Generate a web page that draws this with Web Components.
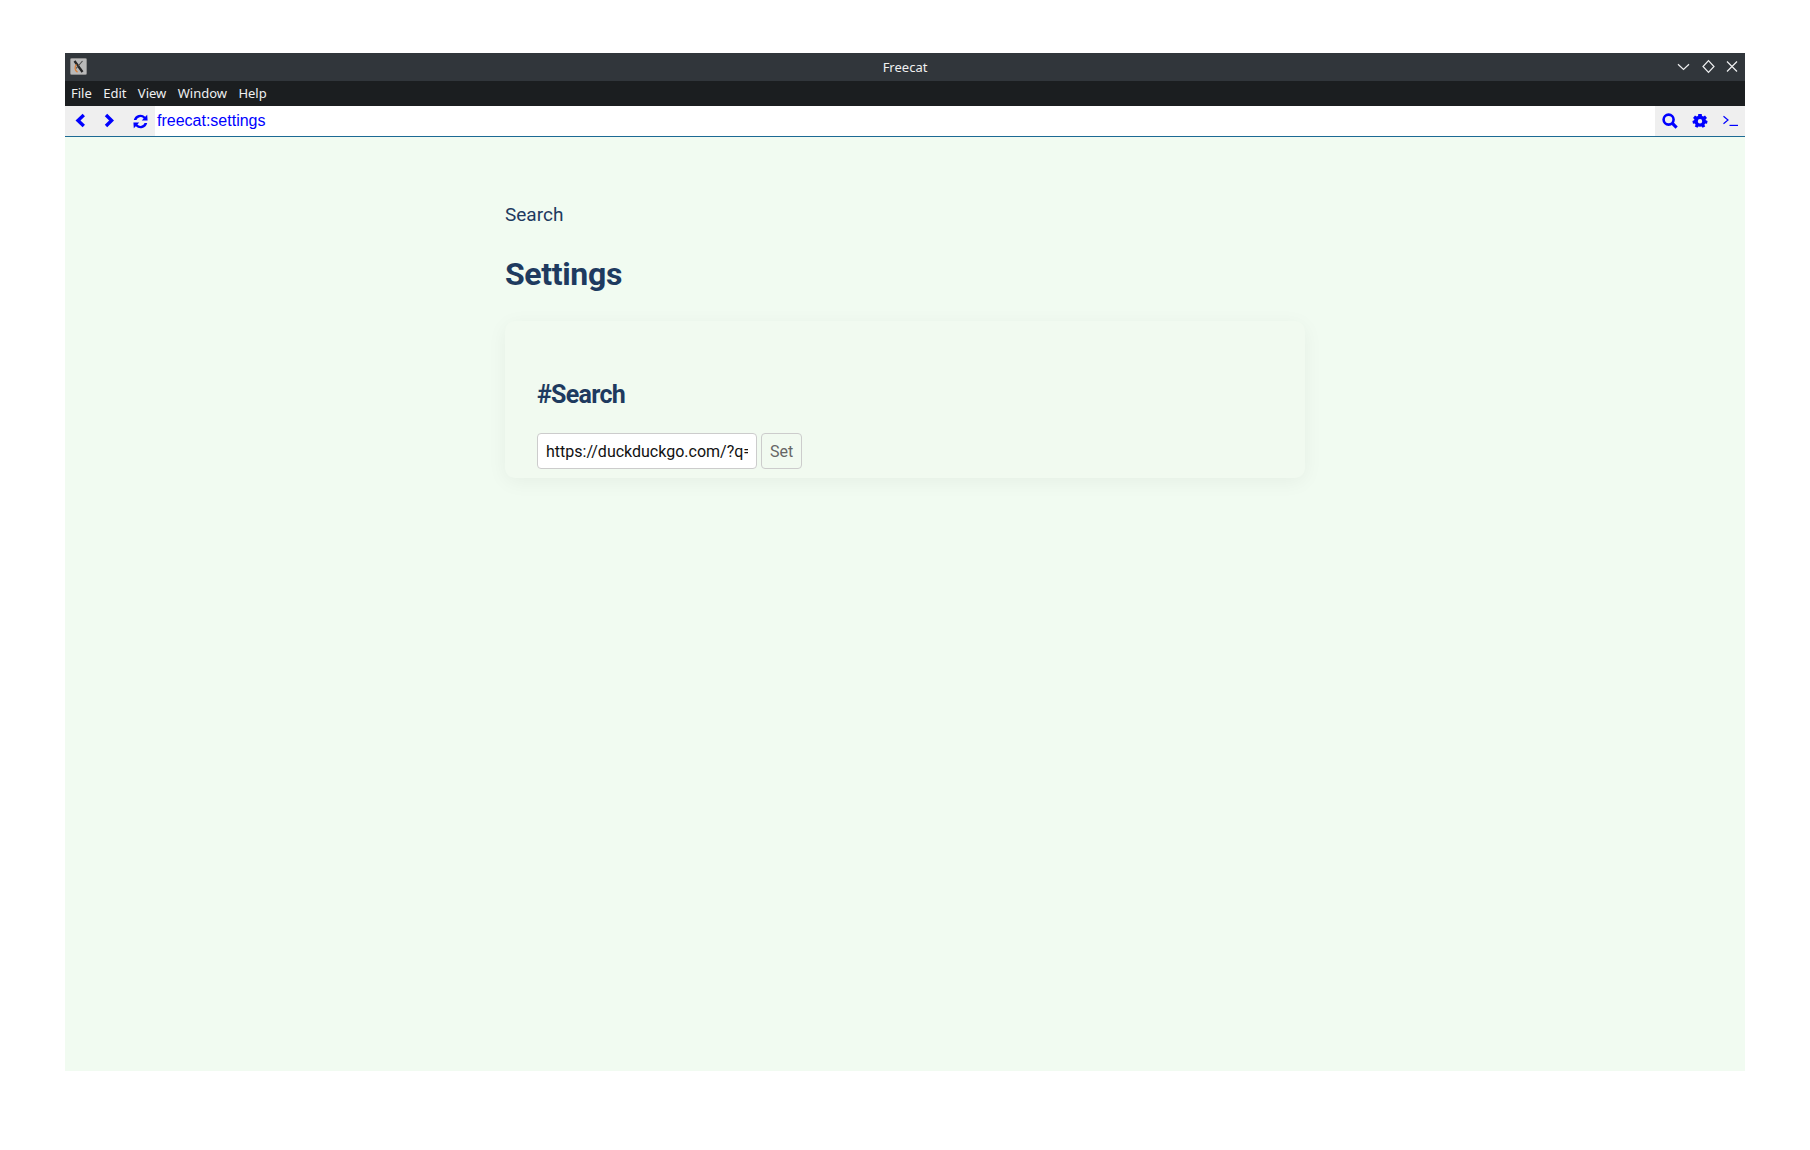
<!DOCTYPE html>
<html>
<head>
<meta charset="utf-8">
<title>Freecat</title>
<style>
    html, body { margin: 0; padding: 0; background: white; }
    body { padding: 53px 65px 0; }
</style>
</head>
<body>
<app-window>
    <title-bar title="Freecat"></title-bar>
    <menu-bar></menu-bar>
    <nav-bar url="freecat:settings"></nav-bar>
    <settings-page>
        <setting-card heading="#Search" value="https://duckduckgo.com/?q=%s"></setting-card>
    </settings-page>
</app-window>
<script>
class AppWindow extends HTMLElement {
    constructor() {
        super();
        this.attachShadow({mode: "open"}).innerHTML = `
        <style>
            :host { display: flex; flex-direction: column; width: 1680px; height: 1018px; }
        </style>
        <slot></slot>`;
    }
}

class TitleBar extends HTMLElement {
    constructor() {
        super();
        this.attachShadow({mode: "open"}).innerHTML = `
        <style>
            :host {
                display: grid; grid-template-columns: 1fr auto 1fr; align-items: center; flex: none;
                height: 28px; background: #31363b; color: #eff0f1;
                font: 13px "Noto Sans", sans-serif;
                padding: 0 5px;
                box-sizing: border-box;
            }
            .icon { width: 17px; height: 17px; display: block; margin-bottom: 1px; }
            .buttons { display: flex; gap: 10px; justify-content: flex-end; margin-bottom: 1px; }
            .buttons svg { width: 15px; height: 15px; display: block; fill: none; stroke: #eff0f1; stroke-width: 1.2; }
        </style>
        <svg class="icon" viewBox="0 0 17 17">
            <rect x="0.5" y="0.5" width="16" height="16" rx="1" fill="#b9b9b9" stroke="#8c8c8c"/>
            <path d="M4.5 3 L12.5 14" stroke="#262626" stroke-width="2.3"/>
            <path d="M12.5 3 L6 10.5" stroke="#4a4a4a" stroke-width="1.1"/>
            <path d="M6.5 6.5 A5 5 0 0 0 7.5 14.2" fill="none" stroke="#d9813c" stroke-width="1.4"/>
        </svg>
        <div class="title">${this.getAttribute("title")}</div>
        <div class="buttons">
            <svg viewBox="0 0 15 15"><path d="M3 5.2 L8.5 10.5 L14 5.2"/></svg>
            <svg viewBox="0 0 15 15"><path d="M8.5 1.6 L14 7.5 L8.5 13.4 L3 7.5 Z"/></svg>
            <svg viewBox="0 0 15 15"><path d="M2 2.5 L12 12.5 M12 2.5 L2 12.5"/></svg>
        </div>`;
    }
}

class MenuBar extends HTMLElement {
    constructor() {
        super();
        const items = ["File", "Edit", "View", "Window", "Help"];
        this.attachShadow({mode: "open"}).innerHTML = `
        <style>
            :host {
                display: flex; align-items: center; gap: 11.4px; flex: none;
                height: 25px; background: #1b1e20; color: #eff0f1;
                font: 13px "Noto Sans", sans-serif;
                padding: 0 6px 2px;
                box-sizing: border-box;
            }
        </style>
        ${items.map(i => `<span>${i}</span>`).join("")}`;
    }
}

class NavBar extends HTMLElement {
    constructor() {
        super();
        this.attachShadow({mode: "open"}).innerHTML = `
        <style>
            :host {
                display: flex; flex: none; height: 31px;
                background: white;
                border-bottom: 1px solid #1d6a94;
                box-sizing: border-box;
                font: 16px "Liberation Sans", sans-serif;
                color: #0000ff;
            }
            .group { display: flex; align-items: center; background: #efefef; height: 30px; box-sizing: border-box; }
            .left { width: 90px; padding-left: 10px; }
            .right { width: 90px; padding-left: 7px; }
            .url { flex: 1; padding-left: 2px; line-height: 29px; }
            svg { display: block; flex: none; }
        </style>
        <div class="group left">
            <svg width="11" height="15" viewBox="0 0 11 15" style="margin:0 18px 2px 0"><path d="M8.8 2 L3 7.5 L8.8 13" fill="none" stroke="#0000ff" stroke-width="3.4"/></svg>
            <svg width="10" height="15" viewBox="0 0 10 15" style="margin:0 19px 2px 0"><path d="M2 2 L7.6 7.5 L2 13" fill="none" stroke="#0000ff" stroke-width="3.4"/></svg>
            <svg width="15" height="15" viewBox="0 0 15 15" fill="#0000ff">
                <path d="M0.8 6 A6.8 6.8 0 0 1 12.2 2.7 L14.2 0.7 L14.6 6.6 L8.8 6.4 L10.6 4.5 A4.3 4.3 0 0 0 3.4 6 Z"/>
                <path d="M14.2 9 A6.8 6.8 0 0 1 2.8 12.3 L0.8 14.3 L0.4 8.4 L6.2 8.6 L4.4 10.5 A4.3 4.3 0 0 0 11.6 9 Z"/>
            </svg>
        </div>
        <div class="url">${this.getAttribute("url")}</div>
        <div class="group right">
            <svg width="16" height="16" viewBox="0 0 16 16" style="margin-right:14px"><circle cx="6.6" cy="6.6" r="5" fill="none" stroke="#0000ff" stroke-width="2.6"/><path d="M10.2 10.2 L14.6 14.6" stroke="#0000ff" stroke-width="3.2"/></svg>
            <svg width="16" height="16" viewBox="0 0 16 16" fill="#0000ff" style="margin-right:15px">
                <path fill-rule="evenodd" d="M6.3 1 H9.7 L10 3 L11.4 3.6 L13 2.5 L15 5 L13.6 6.3 L13.9 7.3 L15.6 8 L15 10.8 L13.2 10.6 L12.4 11.8 L13.2 13.5 L10.6 14.8 L9.6 13.4 L8 13.7 L6.4 13.4 L5.4 14.8 L2.8 13.5 L3.6 11.8 L2.8 10.6 L1 10.8 L0.4 8 L2.1 7.3 L2.4 6.3 L1 5 L3 2.5 L4.6 3.6 L6 3 Z M8 6 A2.2 2.2 0 1 0 8 10.4 A2.2 2.2 0 1 0 8 6 Z"/>
            </svg>
            <svg width="15" height="14" viewBox="0 0 15 14"><path d="M0.5 2.2 L5 6 L0.5 9.8" fill="none" stroke="#0000ff" stroke-width="1.2"/><path d="M6.5 11.4 H15" stroke="#0000ff" stroke-width="1.2"/></svg>
        </div>`;
    }
}

class SettingsPage extends HTMLElement {
    constructor() {
        super();
        this.attachShadow({mode: "open"}).innerHTML = `
        <style>
            :host {
                display: block; flex: 1; min-height: 0;
                background: #f1fbf1;
                color: #1e3a5f;
                font-family: Roboto, sans-serif;
            }
            .inner { width: 800px; margin: 0 auto; padding-top: 66px; }
            .crumb { font-size: 19px; line-height: 24px; }
            h1 { margin: 25px 0 25px; font-size: 32px; line-height: 45px; font-weight: 700; letter-spacing: -0.35px; }
        </style>
        <div class="inner">
            <div class="crumb">Search</div>
            <h1>Settings</h1>
            <slot></slot>
        </div>`;
    }
}

class SettingCard extends HTMLElement {
    constructor() {
        super();
        this.attachShadow({mode: "open"}).innerHTML = `
        <style>
            :host {
                display: block; height: 157px; box-sizing: border-box;
                margin-top: -1px;
                padding: 58px 32px 0;
                background: #f1faf0;
                border-radius: 10px;
                box-shadow: 0 4px 20px rgba(0, 0, 0, 0.05);
            }
            h2 { margin: 0 0 22px; font-size: 25px; line-height: 32px; font-weight: 700; letter-spacing: -0.7px; }
            .row { display: flex; gap: 4px; }
            input {
                width: 220px; height: 36px; box-sizing: border-box;
                padding: 0 8px;
                border: 1px solid #cccccc; border-radius: 4px;
                background: white; color: #111;
                font: 16px Roboto, sans-serif;
                outline: none;
            }
            button {
                width: 41px; height: 36px; box-sizing: border-box; padding: 0;
                border: 1px solid #cccccc; border-radius: 4px;
                background: #f1faf0; color: #666;
                font: 16px Roboto, sans-serif;
            }
        </style>
        <h2>${this.getAttribute("heading")}</h2>
        <div class="row">
            <input type="text" value="${this.getAttribute("value")}">
            <button>Set</button>
        </div>`;
    }
}

customElements.define("app-window", AppWindow);
customElements.define("title-bar", TitleBar);
customElements.define("menu-bar", MenuBar);
customElements.define("nav-bar", NavBar);
customElements.define("settings-page", SettingsPage);
customElements.define("setting-card", SettingCard);
</script>
</body>
</html>
